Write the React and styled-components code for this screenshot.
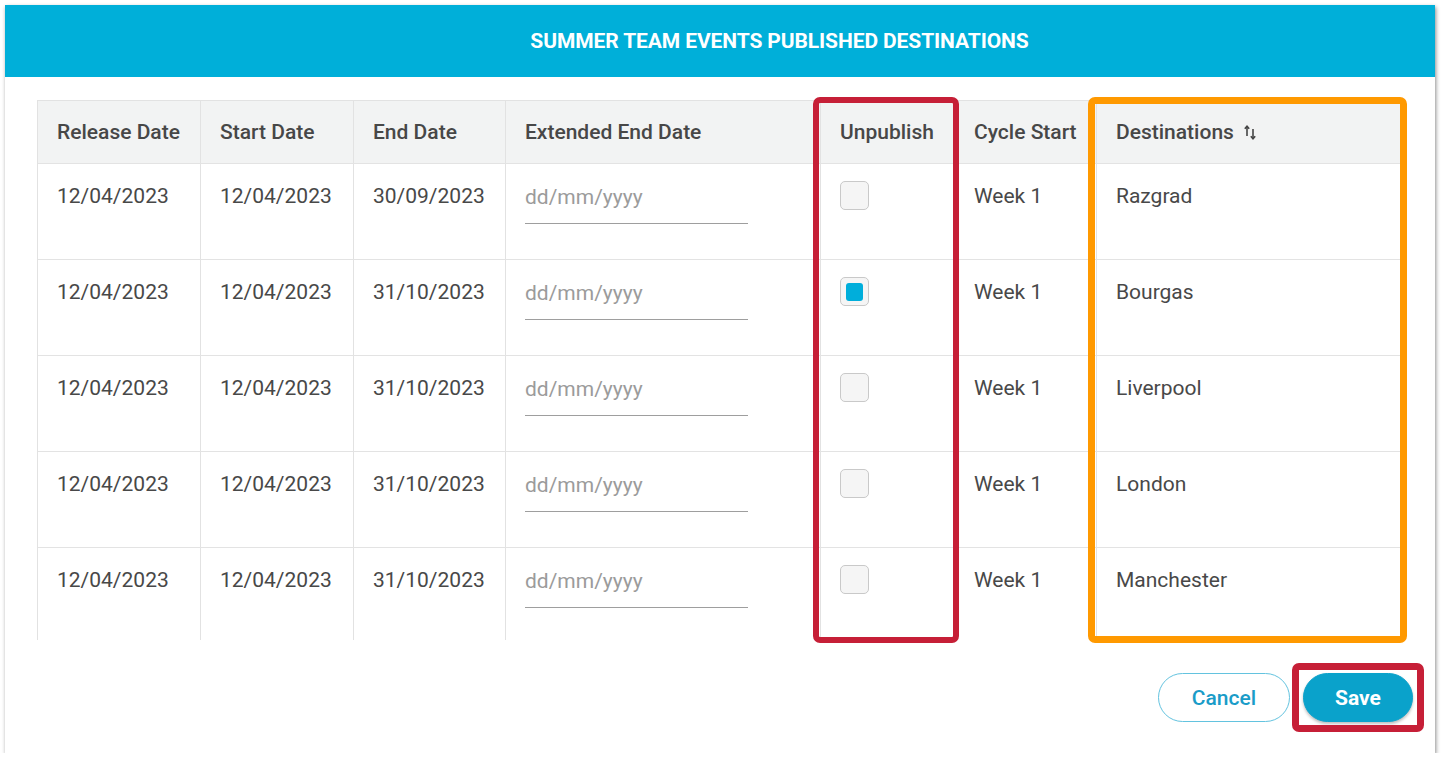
import React from "react";
import styled, { createGlobalStyle } from "styled-components";

const GlobalStyle = createGlobalStyle`
  html, body { margin: 0; padding: 0; background: #ffffff; }
  body { font-family: Roboto, "Liberation Sans", Arial, sans-serif; color: #444; }
  * { box-sizing: border-box; }
`;

const Page = styled.div`
  padding: 5px 0 0 5px;
`;

const Dialog = styled.div`
  position: relative;
  width: 1430px;
  height: 748px;
  background: #fff;
  display: flex;
  flex-direction: column;
  box-shadow: 1px 2px 4px rgba(0, 0, 0, 0.45);
`;

const Header = styled.div`
  height: 72px;
  flex: none;
  background: #00afd9;
  display: flex;
  align-items: center;
  justify-content: center;
  padding-left: 119px;
  color: #fff;
  font-weight: 700;
  font-size: 21px;
  letter-spacing: -0.1px;
`;

const Body = styled.div`
  padding: 23px 35px 0 32px;
`;

const TableScroll = styled.div`
  height: 540px;
  overflow: hidden;
  border-left: 1px solid #e2e2e2;
  border-top: 1px solid #e2e2e2;
`;

const COLS = "162px 153px 152px 315px 134px 142px 304px";

const Row = styled.div`
  display: grid;
  grid-template-columns: ${COLS};
  height: ${(p) => (p.$head ? "63px" : "96px")};
  background: ${(p) => (p.$head ? "#f2f3f3" : "#fff")};
  border-bottom: 1px solid #e3e3e3;
`;

const Cell = styled.div`
  border-left: ${(p) => (p.$first ? "none" : "1px solid #e2e2e2")};
  padding: ${(p) => p.$pad || "20px 19px 0 19px"};
  font-size: 21px;
  line-height: 24px;
  white-space: nowrap;
  display: flex;
  align-items: ${(p) => (p.$head ? "center" : "flex-start")};
  font-weight: ${(p) => (p.$head ? 500 : 400)};
  color: ${(p) => (p.$head ? "#474747" : "#484848")};
`;

const HeadLabel = styled.span`
  display: inline-flex;
  align-items: center;
  gap: 10px;
`;

const DateInput = styled.input`
  width: 223px;
  height: 43px;
  border: none;
  border-bottom: 1px solid #9e9e9e;
  padding: 0 0 11px 0;
  font-family: Roboto, "Liberation Sans", Arial, sans-serif;
  font-size: 21px;
  line-height: 32px;
  color: #444;
  background: transparent;
  outline: none;
  &::placeholder { color: #9b9b9b; }
`;

const Check = styled.span`
  width: 29px;
  height: 29px;
  border-radius: 5px;
  border: 1px solid #c9c9c9;
  background: #f5f5f5;
  display: flex;
  align-items: center;
  justify-content: center;
`;

const CheckMark = styled.span`
  width: 17px;
  height: 18px;
  border-radius: 3px;
  background: #00aedb;
`;

const Footer = styled.div`
  display: flex;
  justify-content: flex-end;
  align-items: center;
  gap: 13px;
  padding: 33px 22px 0 0;
`;

const Button = styled.button`
  height: 49px;
  border-radius: 25px;
  font-family: Roboto, "Liberation Sans", Arial, sans-serif;
  font-size: 21px;
  cursor: pointer;
  width: ${(p) => (p.$primary ? "110px" : "132px")};
  font-weight: ${(p) => (p.$primary ? 700 : 500)};
  color: ${(p) => (p.$primary ? "#fff" : "#1a9cc8")};
  background: ${(p) => (p.$primary ? "#0aa2cb" : "#fff")};
  border: 1px solid ${(p) => (p.$primary ? "#0aa2cb" : "#63c3df")};
  box-shadow: ${(p) => (p.$primary ? "0 2px 3px rgba(0,0,0,0.25)" : "none")};
`;

const Annotation = styled.div`
  position: absolute;
  pointer-events: none;
  border: ${(p) => p.$w}px solid ${(p) => p.$color};
  border-radius: 7px;
`;

const SortIcon = () => (
  <svg width="12" height="17" viewBox="0 0 12 17" fill="none" stroke="#444" strokeWidth="1.6">
    <path d="M3 12V2.5" />
    <path d="M0.8 4.8L3 2.3L5.2 4.8" />
    <path d="M9 5v9.5" />
    <path d="M6.8 12.2L9 14.7L11.2 12.2" />
  </svg>
);

const rows = [
  ["12/04/2023", "12/04/2023", "30/09/2023", false, "Razgrad"],
  ["12/04/2023", "12/04/2023", "31/10/2023", true, "Bourgas"],
  ["12/04/2023", "12/04/2023", "31/10/2023", false, "Liverpool"],
  ["12/04/2023", "12/04/2023", "31/10/2023", false, "London"],
  ["12/04/2023", "12/04/2023", "31/10/2023", false, "Manchester"],
];

export default function App() {
  return (
    <Page>
      <GlobalStyle />
      <Dialog>
        <Header>SUMMER TEAM EVENTS PUBLISHED DESTINATIONS</Header>
        <Body>
          <TableScroll>
            <Row $head>
              <Cell $head $first $pad="0 19px">Release Date</Cell>
              <Cell $head $pad="0 19px">Start Date</Cell>
              <Cell $head $pad="0 19px">End Date</Cell>
              <Cell $head $pad="0 19px">Extended End Date</Cell>
              <Cell $head $pad="0 19px">Unpublish</Cell>
              <Cell $head $pad="0 19px">Cycle Start</Cell>
              <Cell $head $pad="0 19px">
                <HeadLabel>
                  Destinations <SortIcon />
                </HeadLabel>
              </Cell>
            </Row>
            {rows.map((r, i) => (
              <Row key={i}>
                <Cell $first>{r[0]}</Cell>
                <Cell>{r[1]}</Cell>
                <Cell>{r[2]}</Cell>
                <Cell $pad="17px 19px 0 19px">
                  <DateInput placeholder="dd/mm/yyyy" />
                </Cell>
                <Cell $pad="17px 19px 0 19px">
                  <Check>{r[3] && <CheckMark />}</Check>
                </Cell>
                <Cell>Week 1</Cell>
                <Cell>{r[4]}</Cell>
              </Row>
            ))}
          </TableScroll>
        </Body>
        <Footer>
          <Button>Cancel</Button>
          <Button $primary>Save</Button>
        </Footer>
        <Annotation $color="#c61f37" $w={6} style={{ left: 808, top: 92, width: 146, height: 546 }} />
        <Annotation $color="#ff9900" $w={7} style={{ left: 1083, top: 92, width: 319, height: 546 }} />
        <Annotation $color="#c61f37" $w={7} style={{ left: 1287, top: 658, width: 132, height: 69 }} />
      </Dialog>
    </Page>
  );
}
